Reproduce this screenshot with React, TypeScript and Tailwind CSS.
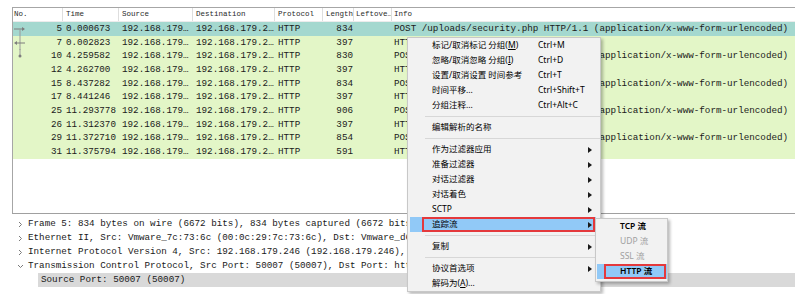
import React from 'react';

const rows = [
  { no: 5, time: '0.000673', len: 834, post: true },
  { no: 7, time: '0.002823', len: 397, post: false },
  { no: 10, time: '4.259582', len: 830, post: true },
  { no: 12, time: '4.262700', len: 397, post: false },
  { no: 15, time: '8.437282', len: 834, post: true },
  { no: 17, time: '8.441246', len: 397, post: false },
  { no: 25, time: '11.293778', len: 906, post: true },
  { no: 26, time: '11.312370', len: 397, post: false },
  { no: 29, time: '11.372710', len: 854, post: true },
  { no: 31, time: '11.375794', len: 591, post: false },
];

function RelIcon({ i }: { i: number }) {
  if (i > 2) return <span className="w-[14px]" />;
  return (
    <svg width="14" height="14" viewBox="0 0 14 14" className="shrink-0">
      {i === 0 && (
        <>
          <path d="M1 7H11" stroke="#7d7d7d" strokeWidth="1" />
          <path d="M9 5L12 7L9 9Z" fill="#7d7d7d" />
          <path d="M7 7V14" stroke="#9a9a9a" strokeWidth="1" />
        </>
      )}
      {i === 1 && (
        <>
          <path d="M7 0V14" stroke="#9a9a9a" strokeWidth="1" />
          <path d="M3 7H12" stroke="#7d7d7d" strokeWidth="1" />
          <path d="M4 5L1 7L4 9Z" fill="#7d7d7d" />
        </>
      )}
      {i === 2 && (
        <>
          <path d="M7 0V7" stroke="#9a9a9a" strokeWidth="1" />
          <circle cx="7" cy="7" r="1.5" fill="#7d7d7d" />
        </>
      )}
    </svg>
  );
}

function Tri() {
  return (
    <svg width="4" height="6" viewBox="0 0 4 6">
      <path d="M0 0L4 3L0 6Z" fill="#1a1a1a" />
    </svg>
  );
}

function Chevron({ open }: { open?: boolean }) {
  return (
    <svg width="7" height="7" viewBox="0 0 7 7">
      {open ? (
        <path d="M1 2L3.5 4.5L6 2" stroke="#7a7a7a" fill="none" strokeWidth="1" />
      ) : (
        <path d="M2 1L4.5 3.5L2 6" stroke="#7a7a7a" fill="none" strokeWidth="1" />
      )}
    </svg>
  );
}

type MItem =
  | { sep: true }
  | { sep?: false; label: React.ReactNode; key?: string; sub?: boolean; hi?: boolean };

const menu: MItem[] = [
  { label: <>标记/取消标记 分组(<u>M</u>)</>, key: 'Ctrl+M' },
  { label: <>忽略/取消忽略 分组(<u>I</u>)</>, key: 'Ctrl+D' },
  { label: '设置/取消设置 时间参考', key: 'Ctrl+T' },
  { label: '时间平移...', key: 'Ctrl+Shift+T' },
  { label: '分组注释...', key: 'Ctrl+Alt+C' },
  { sep: true },
  { label: '编辑解析的名称' },
  { sep: true },
  { label: '作为过滤器应用', sub: true },
  { label: '准备过滤器', sub: true },
  { label: '对话过滤器', sub: true },
  { label: '对话着色', sub: true },
  { label: 'SCTP', sub: true },
  { label: '追踪流', sub: true, hi: true },
  { sep: true },
  { label: '复制', sub: true },
  { sep: true },
  { label: '协议首选项', sub: true },
  { label: <>解码为(<u>A</u>)...</> },
];

const details = [
  { t: 'Frame 5: 834 bytes on wire (6672 bits), 834 bytes captured (6672 bits) on interface 0', open: false },
  { t: 'Ethernet II, Src: Vmware_7c:73:6c (00:0c:29:7c:73:6c), Dst: Vmware_d6:5d:1c (00:50:56:d6:5d:1c)', open: false },
  { t: 'Internet Protocol Version 4, Src: 192.168.179.246 (192.168.179.246), Dst: 192.168.179.2', open: false },
  { t: 'Transmission Control Protocol, Src Port: 50007 (50007), Dst Port: http (80), Seq: 1', open: true },
];

export default function App() {
  return (
    <div className="relative w-[808px] h-[294px] overflow-hidden bg-white text-[#1a1a1a]">
      <div className="pt-[7px] pl-[12px] w-[795px]">
        {/* Packet list */}
        <div className="h-[206px] border-t border-l border-[#a6a6a6] font-['Liberation_Mono','DejaVu_Sans_Mono',monospace]">
          <div className="flex h-[14px] items-center text-[7.5px] text-[#2a2a2a] border-b border-[#ececec]">
            <div className="w-[50px] pl-[1px] h-full flex items-center border-r border-[#dedede]">No.</div>
            <div className="w-[56px] pl-[3px] h-full flex items-center border-r border-[#dedede]">Time</div>
            <div className="w-[74px] pl-[3px] h-full flex items-center border-r border-[#dedede]">Source</div>
            <div className="w-[82px] pl-[3px] h-full flex items-center border-r border-[#dedede]">Destination</div>
            <div className="w-[48px] pl-[3px] h-full flex items-center border-r border-[#dedede]">Protocol</div>
            <div className="w-[31px] pl-[3px] h-full flex items-center border-r border-[#dedede]">Length</div>
            <div className="w-[38px] pl-[2px] h-full flex items-center border-r border-[#dedede] overflow-hidden whitespace-nowrap">Leftove…</div>
            <div className="flex-1 pl-[2px] h-full flex items-center">Info</div>
          </div>
          {rows.map((r, i) => (
            <div
              key={r.no}
              className={`flex h-[13.7px] items-center text-[9.25px] whitespace-nowrap ${i === 0 ? 'bg-[#a4d8cf]' : 'bg-[#e3f6c7]'}`}
            >
              <div className="w-[50px] h-full flex items-center">
                <RelIcon i={i} />
                <span className="flex-1 text-right pr-[1px]">{r.no}</span>
              </div>
              <div className="w-[56px] pl-[3px]">{r.time}</div>
              <div className="w-[74px] pl-[3px]">192.168.179…</div>
              <div className="w-[82px] pl-[3px]">192.168.179.2…</div>
              <div className="w-[48px] pl-[3px]">HTTP</div>
              <div className="w-[31px] text-right pr-[1px]">{r.len}</div>
              <div className="w-[38px]" />
              <div className="flex-1 pl-[2px] overflow-hidden">
                {r.post
                  ? 'POST /uploads/security.php HTTP/1.1  (application/x-www-form-urlencoded)'
                  : 'HTTP/1.1 200 OK  (text/html)'}
              </div>
            </div>
          ))}
        </div>
        {/* Details */}
        <div className="border-t border-[#a0a0a0] pt-[3px] font-['Liberation_Mono','DejaVu_Sans_Mono',monospace] text-[9.25px]">
          {details.map((d) => (
            <div key={d.t} className="flex h-[14px] items-center whitespace-nowrap overflow-hidden">
              <span className="w-[16px] pl-[5px] flex items-center">
                <Chevron open={d.open} />
              </span>
              <span>{d.t}</span>
            </div>
          ))}
          <div className="flex h-[14px] items-center ml-[26px] pl-[3px] bg-[#d9d9d9] whitespace-nowrap">
            Source Port: 50007 (50007)
          </div>
        </div>
      </div>

      {/* Context menu */}
      <div className="absolute left-[407px] top-[37px] w-[194px] bg-[#f2f2f2] border border-[#c8c8c8] shadow-[2px_2px_3px_rgba(0,0,0,0.28)] font-['Noto_Sans','Noto_Sans_CJK_SC',sans-serif] text-[8.5px] text-black">
        {menu.map((m, i) =>
          m.sep ? (
            <div key={i} className="h-[7px] flex items-center">
              <div className="ml-[17px] flex-1 h-px bg-[#d7d7d7]" />
            </div>
          ) : (
            <div key={i} className="relative h-[15px] flex items-center whitespace-nowrap">
              {m.hi && (
                <>
                  <div className="absolute left-[2px] right-[4px] inset-y-0 bg-[#91c9f7]" />
                  <div className="absolute left-[14px] right-[5px] inset-y-0 border-2 border-[#e4393c]" />
                </>
              )}
              <span className="relative w-[130px] pl-[24px]">{m.label}</span>
              {m.key && <span className="relative">{m.key}</span>}
              {m.sub && (
                <span className="absolute left-[180px] top-[5px] flex">
                  <Tri />
                </span>
              )}
            </div>
          )
        )}
      </div>

      {/* Submenu */}
      <div className="absolute left-[595px] top-[218px] w-[73px] pb-[2px] bg-[#f2f2f2] border border-[#c8c8c8] shadow-[2px_2px_3px_rgba(0,0,0,0.28)] font-['Noto_Sans','Noto_Sans_CJK_SC',sans-serif] text-[8.5px]">
        <div className="h-[15px] flex items-center pl-[24px] font-semibold text-black">TCP 流</div>
        <div className="h-[15px] flex items-center pl-[24px] text-[#a0a0a0]">UDP 流</div>
        <div className="h-[15px] flex items-center pl-[24px] text-[#a0a0a0]">SSL 流</div>
        <div className="relative h-[15px] flex items-center pl-[24px] font-semibold text-black">
          <div className="absolute left-[1px] right-0 inset-y-0 bg-[#91c9f7]" />
          <div className="absolute left-[8px] right-[1px] inset-y-0 border-2 border-[#e4393c]" />
          <span className="relative">HTTP 流</span>
        </div>
      </div>
    </div>
  );
}
